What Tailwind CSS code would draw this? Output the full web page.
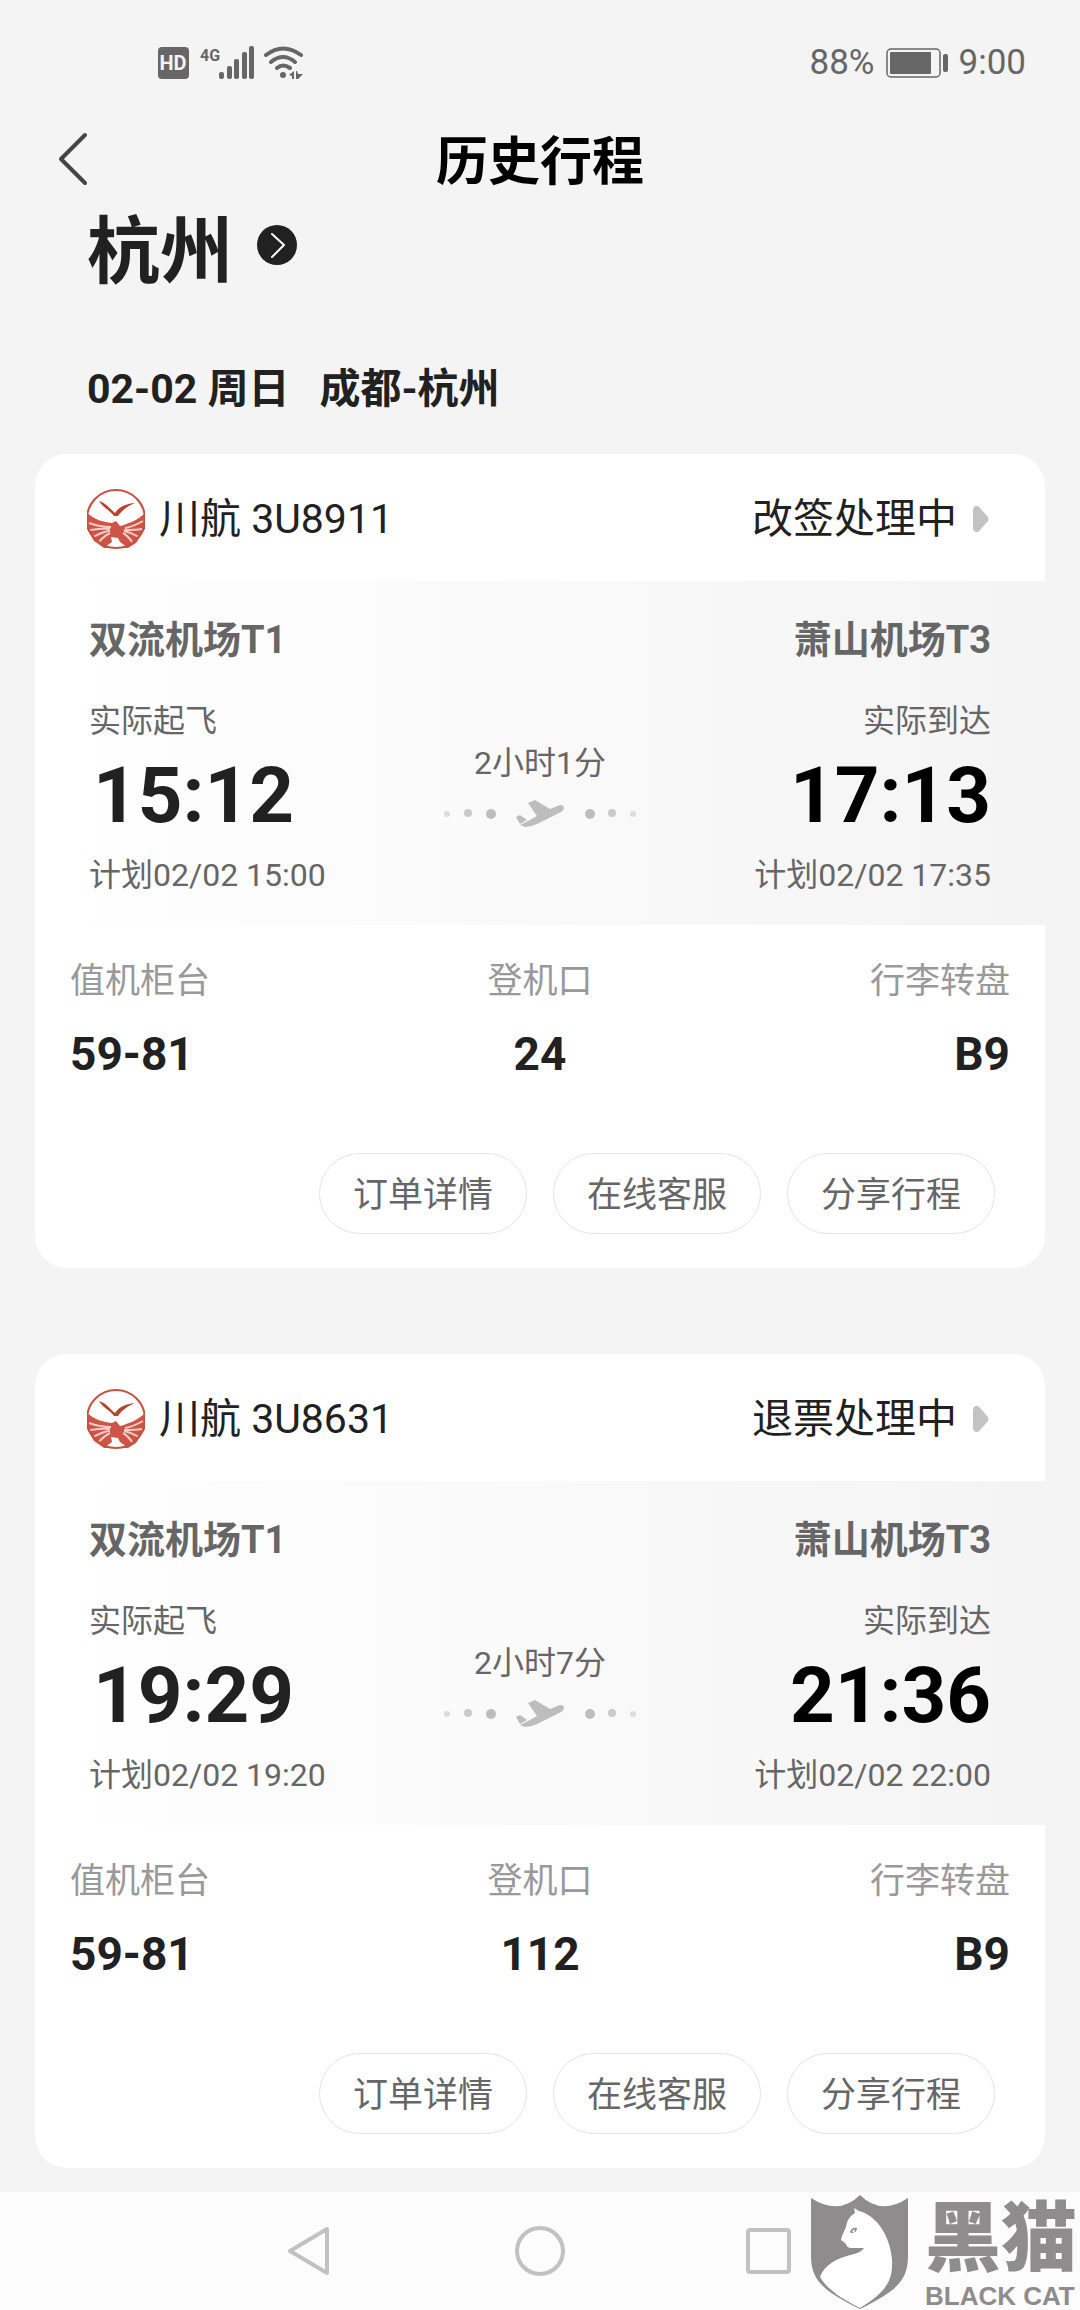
<!DOCTYPE html>
<html lang="zh-CN">
<head>
    <meta charset="UTF-8" />
    <meta name="viewport" content="width=device-width, initial-scale=1.0" />
    <title>历史行程</title>
    <script src="https://cdn.jsdelivr.net/npm/@tailwindcss/browser@4"></script>
    <style>
        body {
            font-family: Roboto, 'Noto Sans CJK SC', sans-serif;
        }
    </style>
</head>
<body class="bg-[#f4f4f4] text-[#212121]">
    <svg class="hidden" xmlns="http://www.w3.org/2000/svg">
        <symbol id="airline" viewBox="0 0 58 60">
            <clipPath id="airline-clip"><path d="M17 0h24l11 9 6 13v16l-6 13-11 9H17L6 51 0 38V22L6 9z"></path></clipPath>
            <g clip-path="url(#airline-clip)">
                <circle cx="29" cy="30" r="30" fill="#fff"></circle>
                <path d="M0 24c7 6 15 9 25 10l4-2 4 5c8-2 18-6 25-13v16l-9 14-8 5H17L7 52 0 40z" fill="#cd5446"></path>
                <path d="M2 34c8 3 15 4 22 4M3 41c7-1 14-2 20-1M6 48c6-3 11-6 17-6M11 54c4-5 8-8 12-10M56 32c-7 4-12 6-18 7M55 40c-6 1-12 1-18 1M52 48c-5-3-10-5-15-6M46 54c-3-4-6-8-10-10" fill="none" stroke="#f3cdc6" stroke-width="2"></path>
                <path d="M24 48l1 5-7 5h22l-7-5-2-4z" fill="#fff"></path>
                <path d="M12 12c7 2 10 7 16 12 4-6 10-9 20-10-7 3-13 7-17 13h-4c-4-6-11-8-15-15z" fill="#b8432f"></path>
                <circle cx="29" cy="30" r="29" fill="none" stroke="#c7523f" stroke-width="2"></circle>
            </g>
        </symbol>
        <symbol id="caret" viewBox="0 0 16 26">
            <path d="M0 4q0-4 4-4 2 0 3 2l8 9q1 2 0 4l-8 9q-1 2-3 2-4 0-4-4z" fill="#c3c3c3"></path>
        </symbol>
        <symbol id="route" viewBox="0 0 192 30">
            <g fill="#bdbdbd">
                <circle cx="3" cy="15" r="3" fill="#dcdcdc"></circle>
                <circle cx="24" cy="14" r="4" fill="#cacaca"></circle>
                <circle cx="47" cy="15" r="5"></circle>
                <circle cx="146" cy="15" r="5"></circle>
                <circle cx="168" cy="14" r="4" fill="#cacaca"></circle>
                <circle cx="189" cy="15" r="3" fill="#dcdcdc"></circle>
                <path d="M84 4l7-3 15 9 10-4q4 0 4 3 0 2-3 4L93 25q-6 3-12 3l-5-2 8-4 9-5z"></path>
                <path d="M72 18l4-2 7 5-7 4z"></path>
            </g>
        </symbol>
    </svg>

    <header>
        <div class="h-24 pt-[30px] pl-[158px] pr-[54px] flex items-center justify-between text-[#666]">
            <svg class="w-[146px] h-[34px]" viewBox="0 0 146 34" fill="currentColor">
                <rect x="0" y="1" width="31" height="32" rx="4"></rect>
                <text x="15" y="24" text-anchor="middle" font-size="20" font-weight="700" fill="#f4f4f4">HD</text>
                <text x="52" y="15" text-anchor="middle" font-size="16" font-weight="700">4G</text>
                <rect x="61" y="26" width="5" height="7" rx="2"></rect>
                <rect x="69" y="20" width="5" height="13" rx="2"></rect>
                <rect x="76" y="13" width="5" height="20" rx="2"></rect>
                <rect x="84" y="6" width="5" height="27" rx="2"></rect>
                <rect x="91" y="0" width="5" height="33" rx="2"></rect>
                <g fill="none" stroke="currentColor" stroke-width="4" stroke-linecap="round">
                    <path d="M108 9q17-13 35 0M113 16q12-10 24 0M119 22q6-5 13 0"></path>
                </g>
                <circle cx="125" cy="29" r="3"></circle>
                <path d="M131 29l5-4v8h-2v-3zM138 25h1l1 3h5l-5 5h-2z"></path>
            </svg>
            <div class="flex items-center gap-[11px] text-[35px] leading-10">
                <span>88%</span>
                <svg class="w-[62px] h-[30px]" viewBox="0 0 62 30">
                    <rect x="1" y="1" width="53" height="28" rx="4" fill="none" stroke="currentColor" stroke-width="1.5"></rect>
                    <rect x="4" y="4" width="41" height="22" rx="1" fill="currentColor"></rect>
                    <rect x="57" y="6" width="5" height="18" rx="2" fill="currentColor"></rect>
                </svg>
                <span>9:00</span>
            </div>
        </div>
        <div class="h-[121px] pt-1 px-[58px] grid grid-cols-[1fr_auto_1fr] items-center">
            <button type="button" aria-label="返回" class="justify-self-start">
                <svg class="block w-[30px] h-[54px]" viewBox="0 0 30 54" fill="none" stroke="#444" stroke-width="4" stroke-linecap="round" stroke-linejoin="round">
                    <path d="M27 3L3 27l24 24"></path>
                </svg>
            </button>
            <h1 class="pt-2 text-[52px] leading-[60px] font-bold text-black">历史行程</h1>
        </div>
    </header>

    <main class="px-[35px] pb-6">
        <section class="pl-[52px] h-[237px]">
            <div class="h-14 flex items-center gap-6">
                <h2 class="pt-3.5 text-[73px] leading-[72px] font-bold">杭州</h2>
                <a href="#" aria-label="杭州">
                    <svg class="block w-10 h-10" viewBox="0 0 40 40" fill="none">
                        <circle cx="20" cy="20" r="20" fill="#212121"></circle>
                        <path d="M15 9l12 11-12 12" stroke="#fff" stroke-width="2" stroke-linecap="round" stroke-linejoin="round"></path>
                    </svg>
                </a>
            </div>
            <p class="mt-[92px] flex gap-[30px] text-[41px] leading-[48px] font-bold"><span>02-02 周日</span><span>成都-杭州</span></p>
        </section>

        <div class="space-y-[86px]">
            <article class="bg-white rounded-[32px]">
                <div class="h-[127px] pt-0.5 pl-[52px] pr-14 flex items-center justify-between text-[41px] leading-[48px]">
                    <h3 class="flex items-center gap-[14px]">
                        <svg class="w-[58px] h-[60px]"><use href="#airline"></use></svg>
                        川航 3U8911
                    </h3>
                    <a href="#" class="flex items-center gap-4">改签处理中 <svg class="w-4 h-[26px]"><use href="#caret"></use></svg></a>
                </div>
                <div class="h-[344px] pl-[54px] pr-[54px] pt-[34px] grid grid-cols-[1fr_auto_1fr] bg-linear-to-r from-white to-[#f4f4f4] text-[32px] leading-[40px] text-[#666]">
                    <div>
                        <p class="text-[38px] leading-[50px] font-bold">双流机场T1</p>
                        <p class="mt-9">实际起飞</p>
                        <p class="pl-1 text-[78px] leading-[110px] font-bold text-[#212121]">15:12</p>
                        <p class="mt-1">计划02/02 15:00</p>
                    </div>
                    <div class="pt-[128px] flex flex-col items-center gap-4">
                        <p>2小时1分</p>
                        <svg class="w-[192px] h-[30px]"><use href="#route"></use></svg>
                    </div>
                    <div class="text-right">
                        <p class="text-[38px] leading-[50px] font-bold">萧山机场T3</p>
                        <p class="mt-9">实际到达</p>
                        <p class="text-[78px] leading-[110px] font-bold text-black">17:13</p>
                        <p class="mt-1">计划02/02 17:35</p>
                    </div>
                </div>
                <dl class="pt-8 px-[35px] grid grid-cols-3 text-center">
                    <div class="text-left">
                        <dt class="text-[35px] leading-[50px] text-[#999]">值机柜台</dt>
                        <dd class="mt-[18px] text-[46px] leading-[58px] font-bold">59-81</dd>
                    </div>
                    <div>
                        <dt class="text-[35px] leading-[50px] text-[#999]">登机口</dt>
                        <dd class="mt-[18px] text-[46px] leading-[58px] font-bold">24</dd>
                    </div>
                    <div class="text-right">
                        <dt class="text-[35px] leading-[50px] text-[#999]">行李转盘</dt>
                        <dd class="mt-[18px] text-[46px] leading-[58px] font-bold">B9</dd>
                    </div>
                </dl>
                <div class="pt-[70px] pb-[34px] pr-[50px] flex justify-end gap-[26px] text-[35px] leading-[48px] text-[#666]">
                    <button type="button" class="w-[208px] h-[81px] pt-1 rounded-full border border-[#e4e4e4]">订单详情</button>
                    <button type="button" class="w-[208px] h-[81px] pt-1 rounded-full border border-[#e4e4e4]">在线客服</button>
                    <button type="button" class="w-[208px] h-[81px] pt-1 rounded-full border border-[#e4e4e4]">分享行程</button>
                </div>
            </article>

            <article class="bg-white rounded-[32px]">
                <div class="h-[127px] pt-0.5 pl-[52px] pr-14 flex items-center justify-between text-[41px] leading-[48px]">
                    <h3 class="flex items-center gap-[14px]">
                        <svg class="w-[58px] h-[60px]"><use href="#airline"></use></svg>
                        川航 3U8631
                    </h3>
                    <a href="#" class="flex items-center gap-4">退票处理中 <svg class="w-4 h-[26px]"><use href="#caret"></use></svg></a>
                </div>
                <div class="h-[344px] pl-[54px] pr-[54px] pt-[34px] grid grid-cols-[1fr_auto_1fr] bg-linear-to-r from-white to-[#f4f4f4] text-[32px] leading-[40px] text-[#666]">
                    <div>
                        <p class="text-[38px] leading-[50px] font-bold">双流机场T1</p>
                        <p class="mt-9">实际起飞</p>
                        <p class="pl-1 text-[78px] leading-[110px] font-bold text-[#212121]">19:29</p>
                        <p class="mt-1">计划02/02 19:20</p>
                    </div>
                    <div class="pt-[128px] flex flex-col items-center gap-4">
                        <p>2小时7分</p>
                        <svg class="w-[192px] h-[30px]"><use href="#route"></use></svg>
                    </div>
                    <div class="text-right">
                        <p class="text-[38px] leading-[50px] font-bold">萧山机场T3</p>
                        <p class="mt-9">实际到达</p>
                        <p class="text-[78px] leading-[110px] font-bold text-black">21:36</p>
                        <p class="mt-1">计划02/02 22:00</p>
                    </div>
                </div>
                <dl class="pt-8 px-[35px] grid grid-cols-3 text-center">
                    <div class="text-left">
                        <dt class="text-[35px] leading-[50px] text-[#999]">值机柜台</dt>
                        <dd class="mt-[18px] text-[46px] leading-[58px] font-bold">59-81</dd>
                    </div>
                    <div>
                        <dt class="text-[35px] leading-[50px] text-[#999]">登机口</dt>
                        <dd class="mt-[18px] text-[46px] leading-[58px] font-bold">112</dd>
                    </div>
                    <div class="text-right">
                        <dt class="text-[35px] leading-[50px] text-[#999]">行李转盘</dt>
                        <dd class="mt-[18px] text-[46px] leading-[58px] font-bold">B9</dd>
                    </div>
                </dl>
                <div class="pt-[70px] pb-[34px] pr-[50px] flex justify-end gap-[26px] text-[35px] leading-[48px] text-[#666]">
                    <button type="button" class="w-[208px] h-[81px] pt-1 rounded-full border border-[#e4e4e4]">订单详情</button>
                    <button type="button" class="w-[208px] h-[81px] pt-1 rounded-full border border-[#e4e4e4]">在线客服</button>
                    <button type="button" class="w-[208px] h-[81px] pt-1 rounded-full border border-[#e4e4e4]">分享行程</button>
                </div>
            </article>
        </div>
    </main>

    <nav class="relative h-[118px] bg-[#fcfcfc] flex items-center justify-center gap-[178px]">
        <button type="button" aria-label="返回">
            <svg class="block w-[50px] h-[50px]" viewBox="0 0 50 50" fill="none" stroke="#c1c1c1" stroke-width="4" stroke-linejoin="round"><path d="M40 3v44L3 25z"></path></svg>
        </button>
        <button type="button" aria-label="主页">
            <svg class="block w-[50px] h-[50px]" viewBox="0 0 50 50" fill="none" stroke="#c1c1c1" stroke-width="4"><circle cx="25" cy="25" r="23"></circle></svg>
        </button>
        <button type="button" aria-label="最近任务">
            <svg class="block w-[50px] h-[50px]" viewBox="0 0 50 50" fill="none" stroke="#c1c1c1" stroke-width="4"><rect x="5" y="4" width="41" height="42" rx="2"></rect></svg>
        </button>

        <div class="absolute right-0 bottom-0 h-[116px] flex gap-4 text-[#8e8c8d]">
            <svg class="w-[98px] h-[116px]" viewBox="0 0 98 116" fill="currentColor">
                <path d="M0 4q28 18 49-3 21 21 48 3v58c0 26-14 36-48 53C15 98 0 88 0 62z"></path>
                <path d="M43 14l5 3c19 5 31 26 33 48 1 20-4 32-32 49C29 104 15 94 9 83c4-12 17-19 34-23 5-1 8-3 10-6H40q-4 0-5-4l-5-4 1-4 4-9c1-7 4-11 9-14z" fill="#fff"></path>
                <path d="M39 38q2-5 7-4 0 5-6 5z"></path>
                <path d="M41 37l3-2-1 4z" fill="#fff"></path>
            </svg>
            <div class="w-[155px] pt-0.5">
                <p class="font-black text-[76px] leading-[86px] whitespace-nowrap">黑猫</p>
                <p class="font-['Liberation_Sans'] font-bold text-[26px] leading-[28px] whitespace-nowrap">BLACK CAT</p>
            </div>
        </div>
    </nav>
</body>
</html>
